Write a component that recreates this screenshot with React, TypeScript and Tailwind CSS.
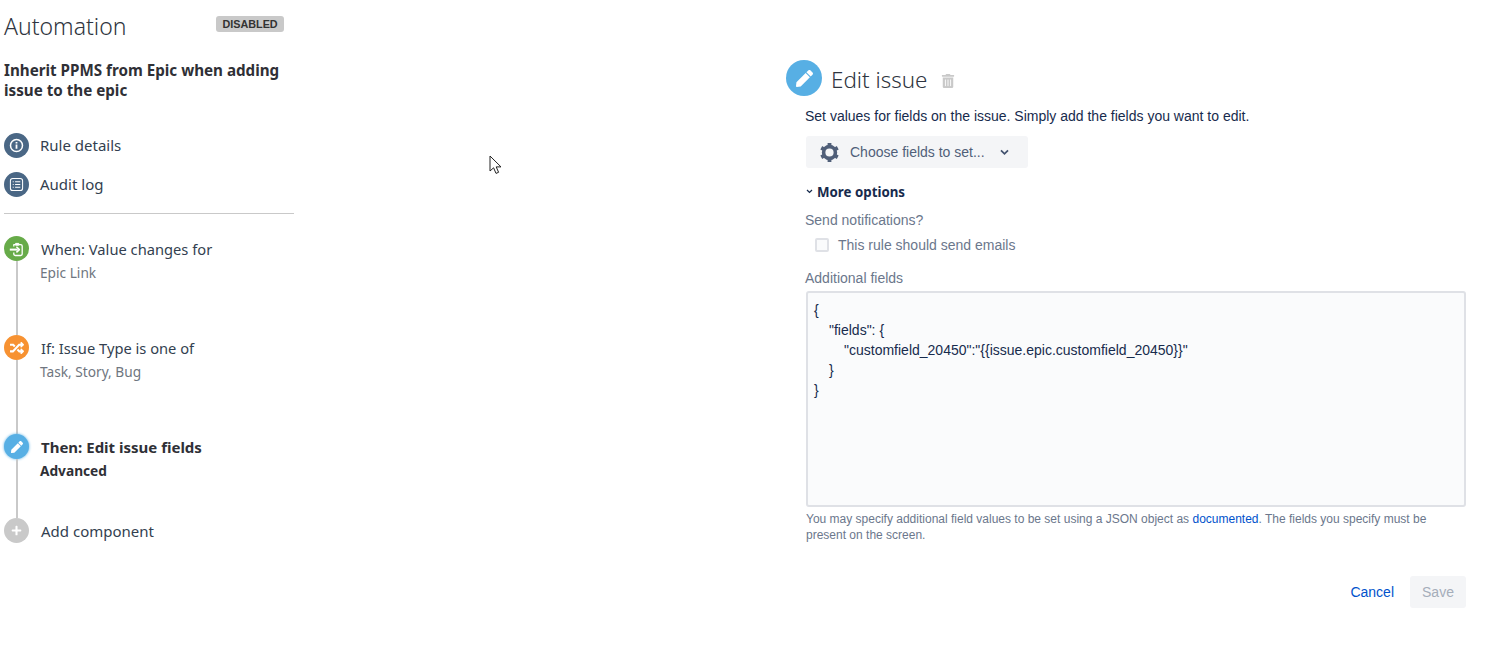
import React from "react";
import { FaPen, FaPlus, FaRandom, FaTrashAlt } from "react-icons/fa";

const segoe = "font-['Noto_Sans','Open_Sans',sans-serif]";

function Step({
  color,
  icon,
  title,
  sub,
  active,
  height,
  size = "text-[14.7px]",
  line = true,
}: {
  color: string;
  icon: React.ReactNode;
  title: string;
  sub?: string;
  active?: boolean;
  height: string;
  size?: string;
  line?: boolean;
}) {
  return (
    <div className={`flex ${height}`}>
      <div className="flex w-[25px] flex-col items-center">
        <div className={`flex h-[25px] w-[25px] shrink-0 items-center justify-center rounded-full text-white ${color} ${active ? "shadow-[0_0_3px_#57afe4]" : ""}`}>
          {icon}
        </div>
        {line && <div className="w-[2px] flex-1 bg-[#c9c9c9]" />}
      </div>
      <div className="ml-[12px]">
        <div className={`${size} leading-[26px] ${active ? "font-bold text-[#2f3036]" : "text-[#333f50]"}`}>{title}</div>
        {sub && (
          <div className={`-ml-px mt-[2px] text-[13.7px] leading-[18px] ${active ? "font-bold text-[#2f3036]" : "text-[#6f7680]"}`}>{sub}</div>
        )}
      </div>
    </div>
  );
}

export default function App() {
  return (
    <div className="relative flex h-[654px] w-[1489px] overflow-hidden bg-white">
      <aside className={`ml-[4px] w-[290px] shrink-0 ${segoe}`}>
        <header className="flex h-[52px] items-start pt-[9px]">
          <h1 className="text-[23px] font-light leading-[34px] text-[#2f3540]">Automation</h1>
          <span className="ml-[90px] mt-[7px] rounded-[3px] bg-[#c9c9c9] px-[6px] text-[10.8px] font-bold leading-[16px] text-[#333] font-['Liberation_Sans',sans-serif]">
            DISABLED
          </span>
        </header>
        <h2 className="mt-[8px] text-[15.2px] font-bold leading-[20px] text-[#2f3036]">
          Inherit PPMS from Epic when adding issue to the epic
        </h2>

        <div className="mt-[33px] flex flex-col gap-[14px] border-b border-[#c9c9c9] pb-[16px]">
          <div className="flex h-[25px] items-center">
            <div className="flex h-[25px] w-[25px] items-center justify-center rounded-full bg-[#4a6785]">
              <svg viewBox="0 0 16 16" className="h-[15px] w-[15px]" fill="none" stroke="white" strokeWidth="1.6">
                <circle cx="8" cy="8" r="6.4" />
                <path d="M8 7v4.4M8 4.2v1.6" strokeWidth="1.9" />
              </svg>
            </div>
            <span className="ml-[11px] text-[15px] text-[#333f50]">Rule details</span>
          </div>
          <div className="flex h-[25px] items-center">
            <div className="flex h-[25px] w-[25px] items-center justify-center rounded-full bg-[#4a6785]">
              <svg viewBox="0 0 16 16" className="h-[15px] w-[15px]" fill="none" stroke="white" strokeWidth="1.1">
                <rect x="1.5" y="1.5" width="13" height="13" rx="2.5" />
                <path d="M4 5h1M6.5 5H12M4 8h1M6.5 8H12M4 11h1M6.5 11H12" />
              </svg>
            </div>
            <span className="ml-[11px] text-[15px] text-[#333f50]">Audit log</span>
          </div>
        </div>

        <div className="mt-[22px]">
          <Step
            color="bg-[#67ab49]"
            height="h-[99px]"
            title="When: Value changes for"
            sub="Epic Link"
            icon={
              <svg viewBox="0 0 16 16" className="h-[16px] w-[16px]" fill="none" stroke="white" strokeWidth="1.3" strokeLinejoin="round">
                <path d="M4.8 5.6V3.6h1.8M9.8 3.6h1.9q1.5 0 1.5 1.5v8q0 1.4-1.5 1.4H6.2q-1.4 0-1.4-1.4v-1.5" />
                <path d="M6.6 4.2V2.4h3.2v1.8z" fill="white" strokeWidth="1" />
                <path d="M0.8 8.6h8" strokeWidth="2" />
                <path d="M7.4 5.8l3 2.8-3 2.8" strokeWidth="1.5" />
              </svg>
            }
          />
          <Step color="bg-[#f79232]" height="h-[99px]" title="If: Issue Type is one of" sub="Task, Story, Bug" icon={<FaRandom size={14} />} />
          <Step color="bg-[#57afe4]" height="h-[84px]" title="Then: Edit issue fields" sub="Advanced" active size="text-[15px]" icon={<FaPen size={12} />} />
          <Step color="bg-[#c9c9c9]" height="h-[25px]" title="Add component" size="text-[15px]" line={false} icon={<FaPlus size={11} />} />
        </div>
      </aside>

      <main className="ml-[492px] mt-[60px] w-[680px] shrink-0 font-['Liberation_Sans',sans-serif]">
        <div className="flex h-[36px] items-center">
          <div className="flex h-[36px] w-[36px] items-center justify-center rounded-full bg-[#57afe4] text-white">
            <FaPen size={17} />
          </div>
          <h2 className={`ml-[9px] mt-[4px] text-[22.4px] font-light leading-[36px] text-[#2f3540] ${segoe}`}>Edit issue</h2>
          <FaTrashAlt size={14} className="ml-[14px] mt-[6px] text-[#c9c9c9]" />
        </div>

        <div className="ml-[20px]">
          <p className="-ml-px mt-[10px] text-[14px] leading-[20px] text-[#172b4d]">
            Set values for fields on the issue. Simply add the fields you want to edit.
          </p>
          <div className="mt-[10px] flex h-[32px] w-[222px] items-center rounded-[3px] bg-[#f4f5f7] text-[14px] text-[#505f79]">
            <svg viewBox="1 1 18 18" className="ml-[14px] h-[19px] w-[19px]" fill="none" stroke="#505f79">
              <circle cx="10" cy="10" r="5.6" strokeWidth="3.4" />
              <path
                d="M10 1v3.4M10 15.6V19M2.2 5.5l3 1.7M14.8 12.8l3 1.7M2.2 14.5l3-1.7M14.8 7.2l3-1.7"
                strokeWidth="3.6"
              />
            </svg>
            <span className="ml-[11px]">Choose fields to set...</span>
            <svg viewBox="0 0 10 8" className="ml-[15px] h-[7px] w-[9px]" fill="none" stroke="#42526e" strokeWidth="2">
              <path d="M1 1.5l4 4 4-4" />
            </svg>
          </div>

          <div className="mt-[16px] flex h-[17px] items-center">
            <svg viewBox="0 0 10 8" className="mb-[2px] h-[5px] w-[7px]" fill="none" stroke="#172b4d" strokeWidth="2">
              <path d="M1 1.5l4 4 4-4" />
            </svg>
            <span className={`ml-[4px] text-[13.3px] font-bold text-[#172b4d] ${segoe}`}>More options</span>
          </div>

          <div className="-ml-px mt-[10px] text-[14px] leading-[18px] text-[#6b778c]">Send notifications?</div>
          <label className="ml-[9px] mt-[7px] flex h-[18px] items-center text-[14px] text-[#6b778c]">
            <span className="h-[14px] w-[14px] rounded-[2px] border-2 border-[#dfe1e6] bg-[#fafbfc]" />
            <span className="ml-[9px]">This rule should send emails</span>
          </label>

          <div className="-ml-px mt-[15px] text-[14px] leading-[18px] text-[#6b778c]">Additional fields</div>
          <div className="mt-[4px] h-[216px] w-[660px] rounded-[3px] border-2 border-[#dfe1e6] bg-[#fafbfc] px-[6px] pt-[7px] text-[14px] leading-[20px] text-[#172b4d]">
            <div>{"{"}</div>
            <div className="pl-[15px]">"fields": {"{"}</div>
            <div className="pl-[30px]">"customfield_20450":"{"{{"}issue.epic.customfield_20450{"}}"}"</div>
            <div className="pl-[15px]">{"}"}</div>
            <div>{"}"}</div>
          </div>

          <p className="mt-[4px] w-[640px] text-[12px] leading-[16px] text-[#6b778c]">
            You may specify additional field values to be set using a JSON object as{" "}
            <a className="text-[#0052cc]">documented</a>. The fields you specify must be present on the screen.
          </p>

          <div className="mt-[33px] flex w-[660px] items-center justify-end text-[14px]">
            <a className="mr-[16px] text-[#0052cc]">Cancel</a>
            <button className="h-[32px] w-[56px] rounded-[3px] bg-[#f4f5f7] text-[#a5adba]">Save</button>
          </div>
        </div>
      </main>

      {/* mouse pointer left in the capture */}
      <svg viewBox="0 0 14 22" className="absolute left-[489px] top-[155px] h-[22px] w-[14px]" fill="white" stroke="#222" strokeWidth="1">
        <path d="M1 1v15l3.6-3.2 2.4 5.6 2.6-1.1-2.4-5.4H12z" />
      </svg>
    </div>
  );
}
